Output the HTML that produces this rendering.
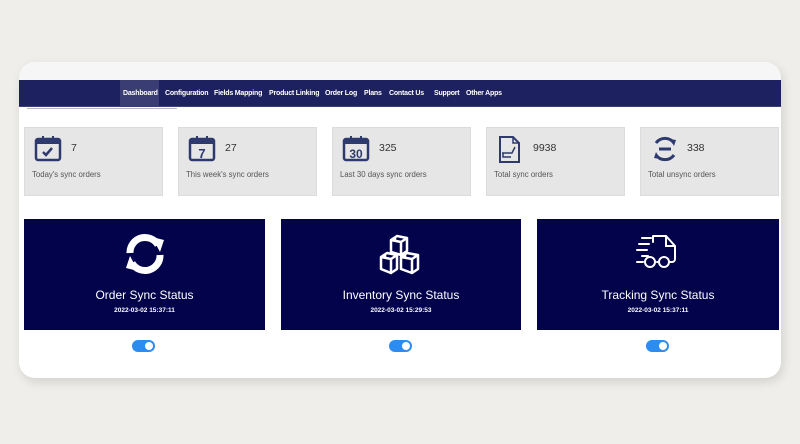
<!DOCTYPE html>
<html><head><style>
*{margin:0;padding:0;box-sizing:border-box}
body{width:800px;height:444px;background:#efeeea;font-family:"Liberation Sans",sans-serif;position:relative;overflow:hidden}
.card{position:absolute;left:19px;top:62px;width:762px;height:316px;background:#fff;border-radius:16px;box-shadow:2px 4px 10px rgba(0,0,0,.12);overflow:hidden}
.top{position:absolute;left:0;top:0;width:762px;height:18px;background:#f6f6f6}
.nav{position:absolute;left:0;top:18px;width:762px;height:27px;background:#1e2160;border-bottom:1px solid #3b3f7a}
.nav span{position:absolute;top:0;line-height:27px;color:#fff;font-size:7px;font-weight:bold;letter-spacing:-.2px}
.dash{background:#3a3d74;padding:0 3px}
.stat{position:absolute;top:65px;width:139px;height:69px;background:#e6e6e6;border:1px solid #dcdcdc}
.stat .n{position:absolute;left:46px;top:14px;font-size:10.5px;color:#333}
.stat .l{position:absolute;left:7px;top:42px;font-size:7.8px;color:#555}
.stat svg{position:absolute;left:9px;top:7px}
.dk{position:absolute;top:157px;height:111px;background:#02034b}
.dk .t{position:absolute;width:100%;top:69px;text-align:center;color:#fff;font-size:12px}
.dk .d{position:absolute;width:100%;top:88px;text-align:center;color:#fff;font-size:6.5px;font-weight:bold}
.dk svg{position:absolute;left:50%;transform:translateX(-50%);top:14px}
.tg{position:absolute;top:278px;width:23px;height:12px;border-radius:6px;background:#2d8cf0}
.tg:after{content:"";position:absolute;right:2px;top:2px;width:8px;height:8px;border-radius:50%;background:#fff}
</style></head><body>
<div class="card">
<div class="top"></div>
<div class="nav">
<span class="dash" style="left:101px;width:39px">Dashboard</span>
<span style="left:146px">Configuration</span>
<span style="left:195px">Fields Mapping</span>
<span style="left:250px">Product Linking</span>
<span style="left:306px">Order Log</span>
<span style="left:345px">Plans</span>
<span style="left:370px">Contact Us</span>
<span style="left:415px">Support</span>
<span style="left:447px">Other Apps</span>
</div>
<div style="position:absolute;left:8px;top:46px;width:150px;height:1px;background:#b8b8bc"></div>

<div class="stat" style="left:5px"><svg width="28" height="27" viewBox="0 0 28 27"><rect x="2" y="4" width="24" height="21" rx="2" fill="none" stroke="#2e3a6e" stroke-width="2.5"/><rect x="2" y="4" width="24" height="5" fill="#2e3a6e"/><rect x="8" y="1" width="2" height="6" fill="#2e3a6e"/><rect x="18" y="1" width="2" height="6" fill="#2e3a6e"/><path d="M9 17l3 3 6-7" stroke="#2e3a6e" stroke-width="2.5" fill="none"/></svg><div class="n">7</div><div class="l">Today's sync orders</div></div>
<div class="stat" style="left:159px"><svg width="28" height="27" viewBox="0 0 28 27"><rect x="2" y="4" width="24" height="21" rx="2" fill="none" stroke="#2e3a6e" stroke-width="2.5"/><rect x="2" y="4" width="24" height="5" fill="#2e3a6e"/><rect x="8" y="1" width="2" height="6" fill="#2e3a6e"/><rect x="18" y="1" width="2" height="6" fill="#2e3a6e"/><text x="14" y="23" text-anchor="middle" font-size="13" font-weight="bold" fill="#2e3a6e" font-family="Liberation Sans">7</text></svg><div class="n">27</div><div class="l">This week's sync orders</div></div>
<div class="stat" style="left:313px"><svg width="28" height="27" viewBox="0 0 28 27"><rect x="2" y="4" width="24" height="21" rx="2" fill="none" stroke="#2e3a6e" stroke-width="2.5"/><rect x="2" y="4" width="24" height="5" fill="#2e3a6e"/><rect x="8" y="1" width="2" height="6" fill="#2e3a6e"/><rect x="18" y="1" width="2" height="6" fill="#2e3a6e"/><text x="14" y="23" text-anchor="middle" font-size="12" font-weight="bold" fill="#2e3a6e" font-family="Liberation Sans">30</text></svg><div class="n">325</div><div class="l">Last 30 days sync orders</div></div>
<div class="stat" style="left:467px"><svg width="28" height="28" viewBox="0 0 28 28"><path d="M4 2h13l6 6v19H4z" fill="none" stroke="#2e3a6e" stroke-width="2"/><path d="M17 2v6h6" fill="none" stroke="#2e3a6e" stroke-width="1.5"/><path d="M6 18h10l3-6M7 18v4h8" fill="none" stroke="#2e3a6e" stroke-width="1.5"/></svg><div class="n">9938</div><div class="l">Total sync orders</div></div>
<div class="stat" style="left:621px"><svg width="30" height="28" viewBox="0 0 30 28"><path d="M6 8A11 11 0 0 1 24 8M24 20A11 11 0 0 1 6 20" fill="none" stroke="#2e3a6e" stroke-width="3"/><path d="M20 4l6 1-2 6zM10 24l-6-1 2-6z" fill="#2e3a6e"/><rect x="9" y="12.5" width="12" height="3" fill="#2e3a6e"/></svg><div class="n">338</div><div class="l">Total unsync orders</div></div>

<div class="dk" style="left:5px;width:241px"><svg width="46" height="42" viewBox="0 0 46 42"><path d="M8 20A15 15 0 0 1 36 12" fill="none" stroke="#fff" stroke-width="7"/><path d="M30 4l12 3-4 12z" fill="#fff"/><path d="M38 22A15 15 0 0 1 10 30" fill="none" stroke="#fff" stroke-width="7"/><path d="M16 38L4 35l4-12z" fill="#fff"/></svg><div class="t">Order Sync Status</div><div class="d">2022-03-02 15:37:11</div></div>
<div class="dk" style="left:262px;width:240px"><svg width="48" height="44" viewBox="0 0 48 44"><g fill="none" stroke="#fff" stroke-width="2.5" stroke-linejoin="round"><path d="M14 7l6-4 10 2-6 4zM14 7v12l10 3V9M24 22l6-4V5"/><path d="M4 24l6-4 10 2-6 4zM4 24v12l10 4V26M14 40l6-4V22"/><path d="M24 24l6-4 11 2-6 4zM24 24v12l11 4V26M35 40l6-4V22"/><path d="M18 4l0 3M8 21v3M28 21v3"/></g></svg><div class="t">Inventory Sync Status</div><div class="d">2022-03-02 15:29:53</div></div>
<div class="dk" style="left:518px;width:242px"><svg width="46" height="40" viewBox="0 0 46 40"><g fill="none" stroke="#fff" stroke-width="2" stroke-linecap="round"><path d="M7 5h9M4 11h10M2 17h10M7 23h6"/><path d="M18 3h13l9 10v13a3 3 0 0 1-3 3h-2M18 3v6M31 3v10h9M23 29h-1M2 29h6"/><circle cx="15" cy="29" r="5"/><circle cx="29" cy="29" r="5"/></g></svg><div class="t">Tracking Sync Status</div><div class="d">2022-03-02 15:37:11</div></div>

<div class="tg" style="left:113px"></div>
<div class="tg" style="left:370px"></div>
<div class="tg" style="left:627px"></div>
</div>
</body></html>
